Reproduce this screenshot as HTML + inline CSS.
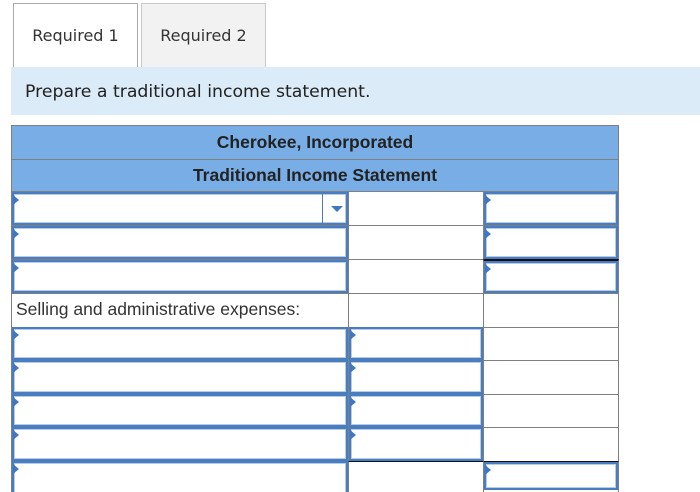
<!DOCTYPE html>
<html style="overflow:hidden;height:492px"><head><style>
body{margin:0;width:700px;height:492px;background:#fff;position:relative;overflow:hidden;font-family:"DejaVu Sans",Verdana,sans-serif}
.a{position:absolute;box-sizing:border-box}
.tab{top:3px;height:65px;font-size:16px;color:#333;text-align:center;line-height:64px;border:1px solid #c8c8c8;border-bottom:none}
.h{left:11px;width:608px;background:#78ade6;border:1px solid #7f7f7f;font-family:"Liberation Sans",Arial,sans-serif;font-weight:bold;font-size:17.5px;color:#222;text-align:center}
.c{border:1px solid #808080;border-top:none}
.in{border:2px solid #4a7dc0;box-shadow:inset 0 0 0 1px #b6cdea;background:#fff}
.in:before{content:"";position:absolute;left:-1px;top:1px;border-left:6px solid #3f78c0;border-top:5px solid transparent;border-bottom:5px solid transparent}
</style></head><body>
<div class="a tab" style="left:13px;width:125px;background:#fff;border-color:#aaa">Required 1</div>
<div class="a tab" style="left:141px;width:125px;background:#f2f2f2">Required 2</div>
<div class="a" style="left:11px;top:67px;width:689px;height:48px;background:#dbebf8;font-size:17.3px;color:#222;line-height:50px;padding-left:14px;white-space:nowrap">Prepare a traditional income statement.</div>
<div class="a h" style="top:125px;height:35px;line-height:33px">Cherokee, Incorporated</div>
<div class="a h" style="top:159px;height:33px;line-height:31px">Traditional Income Statement</div>

<div class="a c" style="left:11px;top:191px;width:338px;height:35px"></div>
<div class="a c" style="left:348px;top:191px;width:136px;height:35px"></div>
<div class="a c" style="left:483px;top:191px;width:136px;height:35px"></div>
<div class="a c" style="left:11px;top:225px;width:338px;height:35px"></div>
<div class="a c" style="left:348px;top:225px;width:136px;height:35px"></div>
<div class="a c" style="left:483px;top:225px;width:136px;height:35px"></div>
<div class="a c" style="left:11px;top:259px;width:338px;height:35px"></div>
<div class="a c" style="left:348px;top:259px;width:136px;height:35px"></div>
<div class="a c" style="left:483px;top:259px;width:136px;height:35px;border-top:2px solid #111"></div>
<div class="a c" style="left:11px;top:293px;width:338px;height:35px;font-family:'Liberation Sans',Arial,sans-serif;font-size:17.5px;color:#333;line-height:32px;padding-left:4px;white-space:nowrap">Selling and administrative expenses:</div>
<div class="a c" style="left:348px;top:293px;width:136px;height:35px"></div>
<div class="a c" style="left:483px;top:293px;width:136px;height:35px"></div>
<div class="a c" style="left:11px;top:327px;width:338px;height:34px"></div>
<div class="a c" style="left:348px;top:327px;width:136px;height:34px"></div>
<div class="a c" style="left:483px;top:327px;width:136px;height:34px"></div>
<div class="a c" style="left:11px;top:360px;width:338px;height:35px"></div>
<div class="a c" style="left:348px;top:360px;width:136px;height:35px"></div>
<div class="a c" style="left:483px;top:360px;width:136px;height:35px"></div>
<div class="a c" style="left:11px;top:394px;width:338px;height:34px"></div>
<div class="a c" style="left:348px;top:394px;width:136px;height:34px"></div>
<div class="a c" style="left:483px;top:394px;width:136px;height:34px"></div>
<div class="a c" style="left:11px;top:427px;width:338px;height:35px"></div>
<div class="a c" style="left:348px;top:427px;width:136px;height:35px"></div>
<div class="a c" style="left:483px;top:427px;width:136px;height:35px"></div>
<div class="a c" style="left:11px;top:461px;width:338px;height:31px;border-bottom:none"></div>
<div class="a c" style="left:348px;top:461px;width:136px;height:31px;border-top:1px solid #111;border-bottom:none"></div>
<div class="a c" style="left:483px;top:461px;width:136px;height:31px;border-top:1px solid #111;border-bottom:none"></div>

<div class="a in" style="left:12px;top:192px;width:336px;height:33px"><div class="a" style="left:308px;top:0;width:1px;height:29px;background:#4a7dc0"></div><div class="a" style="left:317px;top:12px;border-top:6px solid #3f78c0;border-left:6px solid transparent;border-right:6px solid transparent"></div></div>
<div class="a in" style="left:484px;top:192px;width:134px;height:33px"></div>
<div class="a in" style="left:12px;top:226px;width:336px;height:33px"></div>
<div class="a in" style="left:484px;top:226px;width:134px;height:33px"></div>
<div class="a in" style="left:12px;top:260px;width:336px;height:33px"></div>
<div class="a in" style="left:484px;top:261px;width:134px;height:32px"></div>
<div class="a in" style="left:12px;top:327px;width:336px;height:33px"></div>
<div class="a in" style="left:349px;top:327px;width:134px;height:33px"></div>
<div class="a in" style="left:12px;top:360px;width:336px;height:34px"></div>
<div class="a in" style="left:349px;top:360px;width:134px;height:34px"></div>
<div class="a in" style="left:12px;top:394px;width:336px;height:33px"></div>
<div class="a in" style="left:349px;top:394px;width:134px;height:33px"></div>
<div class="a in" style="left:12px;top:427px;width:336px;height:34px"></div>
<div class="a in" style="left:349px;top:427px;width:134px;height:34px"></div>
<div class="a in" style="left:12px;top:461px;width:336px;height:35px"></div>
<div class="a in" style="left:484px;top:462px;width:134px;height:28px"></div>
</body></html>
